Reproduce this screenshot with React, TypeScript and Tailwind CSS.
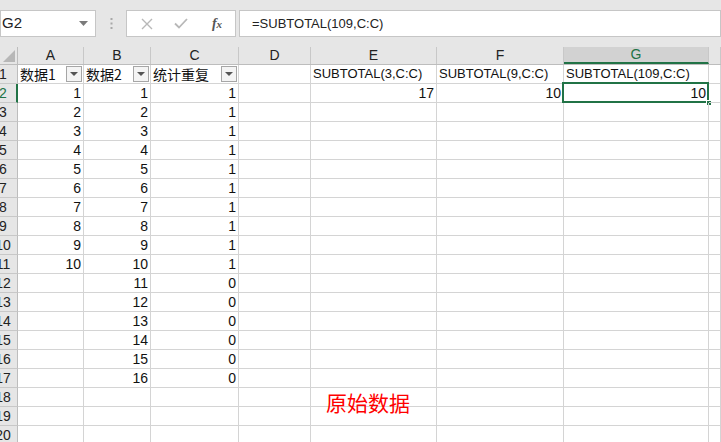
import React from "react";

const cols = ["A", "B", "C", "D", "E", "F", "G", "H"];
const widths = ["w-[66px]", "w-[67px]", "w-[88px]", "w-[72px]", "w-[126px]", "w-[127px]", "w-[145px]", "flex-1"];

const num = "font-['Liberation_Sans',Arial,sans-serif] text-[14px]";
const small = "font-['Liberation_Sans',Arial,sans-serif] text-[13px]";
const cjk = "font-['Noto_Sans_CJK_SC',sans-serif] text-[14px]";

function FilterBtn() {
  return (
    <div className="absolute right-[1px] top-[1px] w-[16px] h-[16px] border border-[#a6a6a6] bg-[#f4f4f4] flex items-center justify-center">
      <svg width="8" height="5" viewBox="0 0 8 5">
        <path d="M0 0 L8 0 L4 4 Z" fill="#555" />
      </svg>
    </div>
  );
}

type Cell = { text?: string; filter?: boolean; cn?: boolean; right?: boolean; sm?: boolean };

function buildRow(r: number): Cell[] {
  const row: Cell[] = cols.map(() => ({}));
  if (r === 1) {
    row[0] = { text: "数据1", filter: true, cn: true };
    row[1] = { text: "数据2", filter: true, cn: true };
    row[2] = { text: "统计重复", filter: true, cn: true };
    row[4] = { text: "SUBTOTAL(3,C:C)", sm: true };
    row[5] = { text: "SUBTOTAL(9,C:C)", sm: true };
    row[6] = { text: "SUBTOTAL(109,C:C)", sm: true };
    return row;
  }
  const n = r - 1;
  if (n <= 10) row[0] = { text: String(n), right: true };
  if (n <= 16) {
    row[1] = { text: String(n), right: true };
    row[2] = { text: n <= 10 ? "1" : "0", right: true };
  }
  if (r === 2) {
    row[4] = { text: "17", right: true };
    row[5] = { text: "10", right: true };
    row[6] = { text: "10", right: true };
  }
  return row;
}

export default function App() {
  const rows = Array.from({ length: 20 }, (_, i) => i + 1);
  return (
    <div className="w-[721px] h-[442px] overflow-hidden bg-white relative">
      {/* formula bar */}
      <div className="h-[47px] bg-[#e6e6e6] flex items-start pt-[10px]">
        <div className="w-[96px] h-[27px] bg-white border border-[#c6c6c6] flex items-center justify-between pl-[1px] pr-[7px]">
          <span className={num + " text-[15px] text-[#222]"}>G2</span>
          <svg width="9" height="5" viewBox="0 0 9 5">
            <path d="M0 0 L9 0 L4.5 5 Z" fill="#7a7a7a" />
          </svg>
        </div>
        <div className="w-[30px] h-[27px] flex items-center justify-center">
          <svg width="3" height="11" viewBox="0 0 3 11">
            <rect x="0.5" y="0" width="2" height="2" fill="#a8a8a8" />
            <rect x="0.5" y="4.5" width="2" height="2" fill="#a8a8a8" />
            <rect x="0.5" y="9" width="2" height="2" fill="#a8a8a8" />
          </svg>
        </div>
        <div className="w-[110px] h-[27px] bg-white border border-[#c6c6c6] flex items-center">
          <div className="w-[36px] flex justify-center pl-[4px]">
            <svg width="12" height="12" viewBox="0 0 12 12">
              <path d="M1 1 L11 11 M11 1 L1 11" stroke="#b8b8b8" strokeWidth="1.4" />
            </svg>
          </div>
          <div className="w-[36px] flex justify-center">
            <svg width="14" height="11" viewBox="0 0 14 11">
              <path d="M1 5.5 L5 9.5 L13 1" stroke="#b8b8b8" strokeWidth="1.8" fill="none" />
            </svg>
          </div>
          <div className="flex-1 flex justify-center">
            <span className="font-['Liberation_Serif',serif] italic text-[14px] text-[#555] font-bold">
              f<span className="text-[11px]">x</span>
            </span>
          </div>
        </div>
        <div className="ml-[3px] flex-1 h-[27px] bg-white border border-[#c6c6c6] flex items-center pl-[12px]">
          <span className={small + " text-[#222]"}>=SUBTOTAL(109,C:C)</span>
        </div>
      </div>

      {/* column headers */}
      <div className="flex h-[18px] bg-[#e6e6e6] border-b border-[#bdbdbd]">
        <div className="w-[18px] h-full border-r border-[#bdbdbd] flex items-end justify-end pr-[2px] pb-[2px]">
          <svg width="12" height="12" viewBox="0 0 12 12">
            <path d="M12 0 L12 12 L0 12 Z" fill="#b7b7b7" />
          </svg>
        </div>
        {cols.map((c, i) => (
          <div
            key={c}
            className={`${widths[i]} h-full border-r border-[#c8c8c8] flex items-center justify-center ${num} ${
              c === "G" ? "bg-[#d2d2d2] text-[#217346] border-b-2 border-b-[#217346]" : "text-[#222]"
            }`}
          >
            {c === "H" ? "" : c}
          </div>
        ))}
      </div>

      {/* rows */}
      {rows.map((r) => {
        const cells = buildRow(r);
        return (
          <div key={r} className="flex h-[19px]">
            <div
              className={`w-[18px] h-full bg-[#e6e6e6] border-b border-[#c8c8c8] overflow-hidden relative ${
                r === 2 ? "border-r-2 border-r-[#217346] bg-[#d2d2d2]" : "border-r border-r-[#bdbdbd]"
              }`}
            >
              <div
                className={`absolute left-[-11px] w-[28px] top-0 h-full flex items-center justify-center ${num} ${
                  r === 2 ? "text-[#217346]" : "text-[#222]"
                }`}
              >
                {r}
              </div>
            </div>
            {cells.map((cell, i) => (
              <div
                key={i}
                className={`${widths[i]} h-full border-r border-b border-[#d4d4d4] relative flex items-center px-[2px] whitespace-nowrap overflow-visible text-[#111] ${
                  cell.right ? "justify-end" : "justify-start"
                } ${cell.cn ? cjk : cell.sm ? small : num}`}
              >
                {cell.text}
                {cell.filter && <FilterBtn />}
                {r === 2 && i === 6 && (
                  <>
                    <div className="absolute left-[-2px] top-[-2px] right-[-1px] bottom-[-1px] border-2 border-[#217346] pointer-events-none" />
                    <div className="absolute right-[-4px] bottom-[-4px] w-[6px] h-[6px] bg-[#217346] border border-white" />
                  </>
                )}
              </div>
            ))}
          </div>
        );
      })}

      {/* floating red text over the grid */}
      <div className="absolute left-[326px] top-[388px] font-['Noto_Sans_CJK_SC',sans-serif] text-[21px] leading-[28px] text-[#ff0000]">
        原始数据
      </div>
    </div>
  );
}
